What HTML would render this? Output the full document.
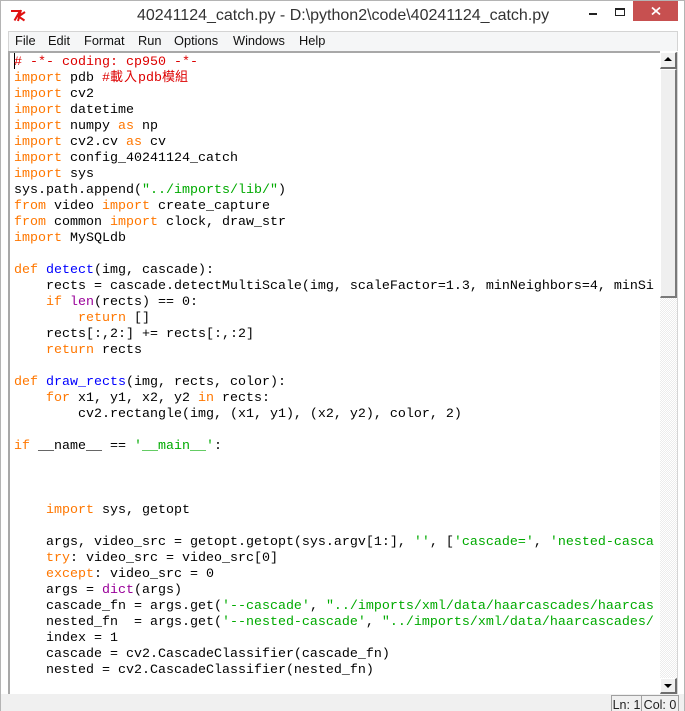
<!DOCTYPE html>
<html><head><meta charset="utf-8"><style>
html,body{margin:0;padding:0;background:#fff}
#w{position:relative;width:685px;height:711px;overflow:hidden;background:#fff;font-family:"Liberation Sans",sans-serif}
#w div{position:absolute}
#title{left:137px;top:6px;font-size:16px;line-height:20px;color:#333;white-space:pre}
#menu{left:8px;top:31px;width:668px;height:19px;background:#f5f6f7;border:1px solid #d4d4d4;border-bottom:0}
.m{top:33px;font-size:12.8px;line-height:16px;color:#111}
#text{left:8px;top:51px;width:652px;height:643px;background:#fff;border-left:2px solid #a8a8a8;border-top:2px solid #a8a8a8;box-sizing:border-box}
#code{left:14px;top:55px;width:640px;height:638px;overflow:hidden;font:13.33px/16px "Liberation Mono","Noto Sans CJK TC",monospace;color:#000;white-space:pre}
.k{color:#f70}.c{color:#d00}.s{color:#0a0}.d{color:#00f}.b{color:#909}
.z{font:13px/0 "Noto Sans CJK TC",sans-serif}
</style></head><body><div id="w">
<div style="left:0;top:0;width:685px;height:1px;background:#b4b4b4"></div>
<div style="left:0;top:0;width:1px;height:711px;background:#b4b4b4"></div>
<div style="left:684px;top:0;width:1px;height:711px;background:#b4b4b4"></div>
<svg style="position:absolute;left:10px;top:9px" width="17" height="13" viewBox="0 0 17 13"><path d="M1 2H10L4.500 11.500M11 1L8 12M15 3L8.500 7.500L14.500 11.500" fill="none" stroke="#e01010" stroke-width="2"/></svg>
<div id="title">40241124_catch.py - D:\python2\code\40241124_catch.py</div>
<div style="left:589px;top:13px;width:8px;height:2px;background:#222"></div>
<div style="left:615px;top:8px;width:8px;height:5px;border:1px solid #222;border-top-width:2px"></div>
<div style="left:633px;top:1px;width:45px;height:20px;background:#c75050"></div>
<svg style="position:absolute;left:650px;top:6px" width="12" height="10" viewBox="0 0 12 10"><path d="M2 1.500L10 8.500M10 1.500L2 8.500" stroke="#fff" stroke-width="1.800" fill="none"/></svg>
<div id="menu"></div>
<div class="m" style="left:15px">File</div>
<div class="m" style="left:48px">Edit</div>
<div class="m" style="left:84px">Format</div>
<div class="m" style="left:138px">Run</div>
<div class="m" style="left:174px">Options</div>
<div class="m" style="left:233px">Windows</div>
<div class="m" style="left:299px">Help</div>
<div id="text"></div>
<div style="left:14px;top:53px;width:1px;height:16px;background:#000"></div>
<div id="code"><span class="c"># -*- coding: cp950 -*-</span>
<span class="k">import</span> pdb <span class="c">#<span class="z" style="letter-spacing:1px">載入</span>pdb<span class="z">模組</span></span>
<span class="k">import</span> cv2
<span class="k">import</span> datetime
<span class="k">import</span> numpy <span class="k">as</span> np
<span class="k">import</span> cv2.cv <span class="k">as</span> cv
<span class="k">import</span> config_40241124_catch
<span class="k">import</span> sys
sys.path.append(<span class="s">"../imports/lib/"</span>)
<span class="k">from</span> video <span class="k">import</span> create_capture
<span class="k">from</span> common <span class="k">import</span> clock, draw_str
<span class="k">import</span> MySQLdb

<span class="k">def</span> <span class="d">detect</span>(img, cascade):
    rects = cascade.detectMultiScale(img, scaleFactor=1.3, minNeighbors=4, minSize=(30, 30))
    <span class="k">if</span> <span class="b">len</span>(rects) == 0:
        <span class="k">return</span> []
    rects[:,2:] += rects[:,:2]
    <span class="k">return</span> rects

<span class="k">def</span> <span class="d">draw_rects</span>(img, rects, color):
    <span class="k">for</span> x1, y1, x2, y2 <span class="k">in</span> rects:
        cv2.rectangle(img, (x1, y1), (x2, y2), color, 2)

<span class="k">if</span> __name__ == <span class="s">'__main__'</span>:



    <span class="k">import</span> sys, getopt

    args, video_src = getopt.getopt(sys.argv[1:], <span class="s">''</span>, [<span class="s">'cascade='</span>, <span class="s">'nested-cascade='</span>])
    <span class="k">try</span>: video_src = video_src[0]
    <span class="k">except</span>: video_src = 0
    args = <span class="b">dict</span>(args)
    cascade_fn = args.get(<span class="s">'--cascade'</span>, <span class="s">"../imports/xml/data/haarcascades/haarcascade.xml"</span>)
    nested_fn  = args.get(<span class="s">'--nested-cascade'</span>, <span class="s">"../imports/xml/data/haarcascades/haarcascade.xml"</span>)
    index = 1
    cascade = cv2.CascadeClassifier(cascade_fn)
    nested = cv2.CascadeClassifier(nested_fn)
</div>
<div style="left:660px;top:52px;width:17px;height:642px;background:conic-gradient(#ececec 25%,#fff 0 50%,#ececec 0 75%,#fff 0) 0 0/2px 2px"></div>
<div style="left:677px;top:52px;width:1px;height:642px;background:#d4d4d4"></div>
<div style="left:660px;top:52px;width:14px;height:14px;background:#f0f0f0;border:1px solid #fff;border-right:2px solid #6e6e6e;border-bottom:2px solid #6e6e6e"></div>
<div style="left:664px;top:57px;width:0;height:0;border:4px solid transparent;border-top:0;border-bottom:4px solid #000"></div>
<div style="left:660px;top:69px;width:14px;height:226px;background:#efefef;border:1px solid #fff;border-right:2px solid #7a7a7a;border-bottom:2px solid #7a7a7a"></div>
<div style="left:660px;top:678px;width:14px;height:13px;background:#f0f0f0;border:1px solid #fff;border-right:2px solid #6e6e6e;border-bottom:2px solid #6e6e6e"></div>
<div style="left:664px;top:684px;width:0;height:0;border:4px solid transparent;border-bottom:0;border-top:4px solid #000"></div>
<div style="left:1px;top:694px;width:683px;height:17px;background:#f0f0f0"></div>
<div style="left:611px;top:695px;width:29px;height:16px;border:1px solid #a0a0a0;border-bottom:0;font-size:12.5px;line-height:18px;color:#222;white-space:pre;text-align:center">Ln: 1</div>
<div style="left:641px;top:695px;width:36px;height:16px;border:1px solid #a0a0a0;border-bottom:0;font-size:12.5px;line-height:18px;color:#222;white-space:pre;text-align:center">Col: 0</div>
</div></body></html>
